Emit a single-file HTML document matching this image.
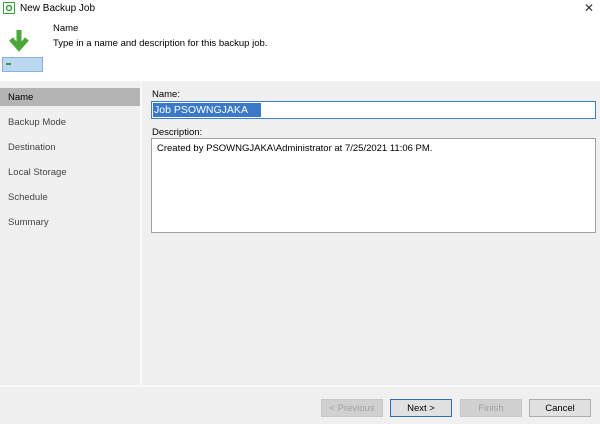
<!DOCTYPE html>
<html><head><style>
body{margin:0;width:600px;height:424px;background:#f0f0f0;font-family:"Liberation Sans",sans-serif;font-size:9.5px;color:#000;position:relative;overflow:hidden}
.a{position:absolute}
.btn{position:absolute;top:399px;height:18px;width:62px;border:1px solid #adadad;background:#e1e1e1;text-align:center;line-height:18px;box-sizing:border-box;font-size:9.5px}
</style></head><body>
<div class="a" style="left:0;top:0;width:600px;height:81px;background:#fff"></div>
<svg class="a" style="left:3px;top:2px" width="12" height="12"><rect x="0.5" y="0.5" width="11" height="11" fill="none" stroke="#3aa03a"/><circle cx="6" cy="6" r="2.5" fill="none" stroke="#3aa03a" stroke-width="1.5"/></svg>
<div class="a" style="left:20px;top:3px;font-size:10px">New Backup Job</div>
<div class="a" style="left:584px;top:1px;font-size:12px;color:#333">✕</div>
<svg class="a" style="left:8px;top:29px" width="22" height="24"><path d="M11 1V17M3 10L11 19L19 10" fill="none" stroke="#4aa83a" stroke-width="5"/></svg>
<div class="a" style="left:2px;top:57px;width:39px;height:13px;background:#bcd7f0;border:1px solid #8ab0d8"></div>
<div class="a" style="left:6px;top:63px;width:5px;height:2px;background:#3a9a3a"></div>
<div class="a" style="left:53px;top:23px">Name</div>
<div class="a" style="left:53px;top:38px">Type in a name and description for this backup job.</div>
<div class="a" style="left:140px;top:81px;width:2px;height:304px;background:#fafafa"></div>
<div class="a" style="left:0;top:385px;width:600px;height:2px;background:#fafafa"></div>
<div class="a" style="left:0;top:88px;width:140px;height:18px;background:#b4b4b4"></div>
<div class="a" style="left:8px;top:92px">Name</div>
<div class="a" style="left:8px;top:117px;color:#444">Backup Mode</div>
<div class="a" style="left:8px;top:142px;color:#444">Destination</div>
<div class="a" style="left:8px;top:167px;color:#444">Local Storage</div>
<div class="a" style="left:8px;top:192px;color:#444">Schedule</div>
<div class="a" style="left:8px;top:217px;color:#444">Summary</div>
<div class="a" style="left:152px;top:89px">Name:</div>
<div class="a" style="left:151px;top:101px;width:445px;height:18px;box-sizing:border-box;border:1px solid #3c7fc8;background:#fff"></div>
<div class="a" style="left:153px;top:103px;background:#3a78c8;color:#fff;padding:0 1px;line-height:14px;font-size:10.5px;width:106px;white-space:nowrap">Job PSOWNGJAKA</div>
<div class="a" style="left:152px;top:127px">Description:</div>
<div class="a" style="left:151px;top:138px;width:445px;height:95px;box-sizing:border-box;border:1px solid #a0a0a0;background:#fff"></div>
<div class="a" style="left:157px;top:143px">Created by PSOWNGJAKA\Administrator at 7/25/2021 11:06 PM.</div>
<div class="btn" style="left:321px;color:#a0a0a0;background:#d0d0d0;border-color:#c8c8c8">&lt; Previous</div>
<div class="btn" style="left:390px;border:1px solid #2a6fb8">Next &gt;</div>
<div class="btn" style="left:460px;color:#a0a0a0;background:#d0d0d0;border-color:#c8c8c8">Finish</div>
<div class="btn" style="left:529px">Cancel</div>
</body></html>
